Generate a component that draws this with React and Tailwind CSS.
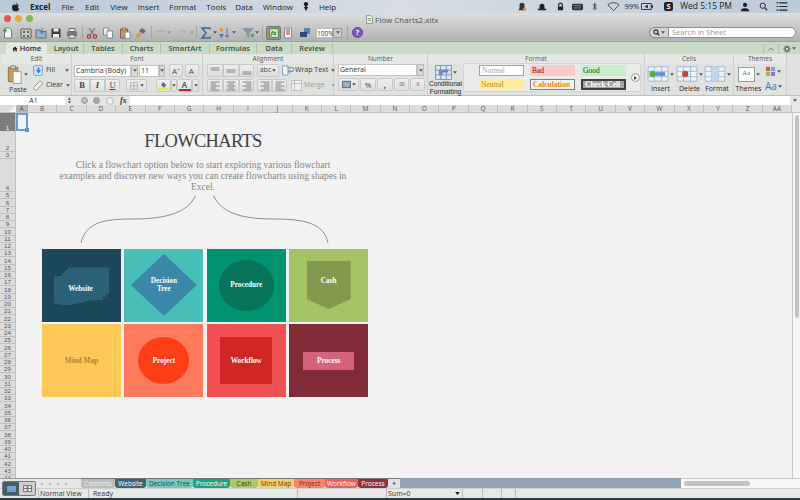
import React from "react";

const sans = "font-['Open_Sans',sans-serif]";
const serif = "font-['Liberation_Serif',serif]";

const columns = ["B","C","D","E","F","G","H","I","J","K","L","M","N","O","P","Q","R","S","T","U","V","W","X","Y","Z","AA"];
const rows = Array.from({ length: 40 }, (_, i) => i + 5);
const menus = [
  ["File", "ml-[11px]"], ["Edit", "ml-[11px]"], ["View", "ml-[11px]"], ["Insert", "ml-[10px]"], ["Format", "ml-[10px]"],
  ["Tools", "ml-[10px]"], ["Data", "ml-[9px]"], ["Window", "ml-[10px]"],
];
const ribbonTabs = [
  ["Layout", "w-[35px]"], ["Tables", "w-[39px]"], ["Charts", "w-[38px]"], ["SmartArt", "w-[49px]"],
  ["Formulas", "w-[47px]"], ["Data", "w-[35px]"], ["Review", "w-[41px]"],
];
const sheetTabs = [
  ["Contents", "w-[34px] bg-[#bcbcbc] text-[#f2f2f2]"],
  ["Website", "w-[31px] bg-[#3e6474] text-white"],
  ["Decision Tree", "w-[47px] bg-[#79c9bf] text-[#23433f]"],
  ["Procedure", "w-[37px] bg-[#21a17f] text-white"],
  ["Cash", "w-[28px] bg-[#aac86e] text-[#36421c]"],
  ["Mind Map", "w-[36px] bg-[#f7cd6c] text-[#5b4412]"],
  ["Project", "w-[31px] bg-[#fb8468] text-[#6e1e0c]"],
  ["Workflow", "w-[33px] bg-[#ee6060] text-white"],
  ["Process", "w-[30px] bg-[#8a3242] text-white"],
];

function Ico({ className = "", children }) {
  return <svg viewBox="0 0 12 12" className={`w-[12px] h-[12px] shrink-0 ${className}`}>{children}</svg>;
}
function Caret({ className = "" }) {
  return <svg viewBox="0 0 6 4" className={`w-[4px] h-[3px] shrink-0 ${className}`}><path d="M0 0h6L3 4z" fill="#555" /></svg>;
}
function Sep({ className = "" }) {
  return <div className={`w-px h-[13px] shrink-0 bg-[#a5a5a5] ${className}`} />;
}
function Btn({ className = "", children }) {
  return <div className={`h-[13px] shrink-0 flex items-center justify-center border border-[#c9c9c9] rounded-[2px] bg-linear-to-b from-[#efefef] to-[#dedede] text-[#444] ${className}`}>{children}</div>;
}
function Group({ w, label, children }) {
  return (
    <div className={`${w} shrink-0 h-full flex flex-col border-r border-[#cdd1cd]`}>
      <div className={`h-[10px] leading-[10px] text-center text-[6.5px] text-[#555] bg-[#e6e8e6] ${sans}`}>{label}</div>
      <div className="flex-1 flex whitespace-nowrap">{children}</div>
    </div>
  );
}
function Lines({ kind }) {
  const ys = { top: [3, 5], mid: [5, 7], bot: [7, 9], left: [2, 4, 6, 8, 10], center: [2, 4, 6, 8, 10], right: [2, 4, 6, 8, 10] }[kind];
  return (
    <Ico className="w-[11px] h-[11px]">
      {ys.map((y, i) => {
        const short = i % 2 === 1;
        const x1 = kind === "right" && short ? 5 : kind === "center" && short ? 3 : 1.5;
        const x2 = kind === "left" && short ? 7 : kind === "center" && short ? 9 : 10.5;
        return <path key={y} d={`M${x1} ${y}H${x2}`} stroke="#808080" strokeWidth="1" />;
      })}
    </Ico>
  );
}
function Grid3({ children }) {
  return (
    <svg viewBox="0 0 24 20" className="w-[22px] h-[18px] shrink-0">
      <path d="M1 2h22v16H1z" fill="#eef3f8" stroke="#9db6d2" />
      <path d="M1 7h22M1 13h22M8 2v16M16 2v16" stroke="#9db6d2" />
      {children}
    </svg>
  );
}

export default function App() {
  return (
    <div className={`w-[800px] h-[500px] overflow-hidden flex flex-col bg-[#f2f2f2] ${sans}`}>
      {/* Mac menu bar */}
      <div className="h-[13px] shrink-0 flex items-center bg-linear-to-r from-[#b9c9d8] via-[#d6dde4] to-[#bccbd9] text-[8px] text-[#222] pl-[11px] pr-[12px]">
        <svg viewBox="0 0 12 14" className="w-[9px] h-[10px]"><path d="M8.6 1c.1 1-.9 2.400-2.200 2.300C6.300 2.100 7.500 1 8.600 1zM6.300 3.900c.6 0 1.200-.5 2.200-.5.9 0 1.800.5 2.300 1.200-2 1.200-1.600 4 .4 4.800-.5 1.400-1.700 3.600-3 3.600-.8 0-1.100-.5-2-.5s-1.300.5-2 .5C2.700 13 1 10 1 7.600 1 5 2.700 3.500 4.300 3.500c.9 0 1.500.4 2 .4z" fill="#222" /></svg>
        <span className="ml-[10px] font-bold">Excel</span>
        {menus.map(([m, c]) => <span key={m} className={c}>{m}</span>)}
        <svg viewBox="0 0 8 12" className="w-[6px] h-[9px] ml-[10px]"><path d="M4 0c2 0 3 1 3 3 0 1.500-2 2-2 3.500h2L4 12 1 6.500h2C3 5 1 4.500 1 3c0-2 1-3 3-3z" fill="#222" /></svg>
        <span className="ml-[10px]">Help</span>
        <div className="ml-auto flex items-center text-[#1b1b1b]">
          <svg viewBox="0 0 12 12" className="w-[10px] h-[10px]"><path d="M6 1a3 3 0 0 1 3 3v3l1 3H2l1-3V4a3 3 0 0 1 3-3z" fill="#333" /><circle cx="9" cy="8.500" r="2" fill="#e28a2b" /></svg>
          <svg viewBox="0 0 12 12" className="w-[12px] h-[10px] ml-[9px]"><path d="M3 8V5a3 3 0 0 1 6 0v3h2v2H1V8z" fill="#222" /></svg>
          <svg viewBox="0 0 12 12" className="w-[9px] h-[9px] ml-[8px]"><path d="M3.500 6V4a2.500 2.500 0 0 1 5 0v2" fill="none" stroke="#222" strokeWidth="1.500" /><path d="M2.500 6h7v5h-7z" fill="#222" /></svg>
          <svg viewBox="0 0 12 8" className="w-[11px] h-[8px] ml-[7px]"><rect x="0" y="0.500" width="12" height="7" rx="1.500" fill="#333" /><path d="M2 2.500h8M2 5h8" stroke="#888" /></svg>
          <svg viewBox="0 0 8 12" className="w-[6px] h-[9px] ml-[9px]"><path d="M1 3l5 5-2.500 2.500v-9L6 4 1 9" fill="none" stroke="#333" /></svg>
          <svg viewBox="0 0 16 11" className="w-[13px] h-[9px] ml-[9px]"><path d="M1 3.500C5 0 11 0 15 3.500L8 10.500z" fill="none" stroke="#333" /></svg>
          <span className="ml-[4px] text-[7.5px]">99%</span>
          <svg viewBox="0 0 14 8" className="w-[12px] h-[7px] ml-[2px]"><path d="M.5.500h11.500v7H.500z" fill="none" stroke="#222" /><path d="M12.500 2.500H14v3h-1.500z" fill="#222" /><path d="M8 2L4 4l4 2z" fill="#222" /></svg>
          <div className="w-[9px] h-[9px] ml-[11px] rounded-[2px] bg-[#222] text-white text-[7.5px] leading-[9px] text-center font-bold">S</div>
          <span className="ml-[7px] text-[8.5px]">Wed 5:15 PM</span>
          <svg viewBox="0 0 12 12" className="w-[10px] h-[10px] ml-[8px]"><circle cx="6" cy="3.500" r="2.500" fill="#222" /><path d="M1 11c0-3 3-3.500 5-3.500s5 .5 5 3.500z" fill="#222" /></svg>
          <svg viewBox="0 0 12 12" className="w-[9px] h-[9px] ml-[9px]"><circle cx="5" cy="5" r="3.500" fill="none" stroke="#222" strokeWidth="1.300" /><path d="M7.500 7.500L11 11" stroke="#222" strokeWidth="1.500" /></svg>
          <svg viewBox="0 0 12 10" className="w-[12px] h-[9px] ml-[8px]"><path d="M0 1h2M3 1h9M0 5h2M3 5h9M0 9h2M3 9h9" stroke="#222" strokeWidth="1.300" /></svg>
        </div>
      </div>

      {/* Window title + toolbar */}
      <div className="h-[29px] shrink-0 flex flex-col bg-linear-to-b from-[#dedede] to-[#b2b2b2] border-b border-[#a0a0a0]">
        <div className="h-[12px] flex items-center relative pl-[4px]">
          <div className="w-[7px] h-[7px] rounded-full bg-[#e2574c]" />
          <div className="w-[7px] h-[7px] rounded-full bg-[#e9a83a] ml-[4px]" />
          <div className="w-[7px] h-[7px] rounded-full bg-[#7fb957] ml-[4px]" />
          <div className="absolute left-[366px] top-[1px] flex items-center text-[8px] leading-[11px] text-[#555]">
            <svg viewBox="0 0 8 10" className="w-[7px] h-[9px]"><path d="M.5.500h5l2 2v7h-7z" fill="#eef2ec" stroke="#889" /><path d="M2 4h4M2 6h4" stroke="#6a9a6a" /></svg>
            <span className="ml-[2px]">Flow Charts2.xltx</span>
          </div>
        </div>
        <div className="h-[17px] flex items-center pl-[2px]">
          <Ico><path d="M2.500 1h5l2 2v8h-7z" fill="#f5f5f5" stroke="#778" /><path d="M1 3.500h4M3 1.500v4" stroke="#3aa13a" strokeWidth="1.500" /></Ico>
          <Ico className="ml-[6px]"><path d="M1 2h10v9H1z" fill="#d8c9a0" stroke="#566" /><path d="M3 4h2v2H3zM7 4h2v2H7zM3 8h2v2H3zM7 8h2v2H7z" fill="#3b6f91" /></Ico>
          <Ico className="ml-[3px]"><path d="M1 3h4l1 1.500h5V11H1z" fill="#9db5cc" stroke="#5a6f84" /><path d="M7 1.500v5M5 4.500l2 2 2-2" stroke="#3d6fb0" fill="none" /></Ico>
          <Ico className="ml-[3px]"><path d="M1.500 1.500h8l1 1v8h-9z" fill="#3d3d3d" /><path d="M3.500 1.500h5v3h-5zM3 7h6v3.500H3z" fill="#eee" /></Ico>
          <Ico className="ml-[4px]"><path d="M3 1.500h6v3H3z" fill="#f4f4f4" stroke="#666" /><path d="M1 4.500h10v4.500H1z" fill="#777" /><path d="M3 8h6v3H3z" fill="#f4f4f4" stroke="#666" /></Ico>
          <Sep className="ml-[4px]" />
          <Ico className="ml-[3px]"><path d="M3 1l5 7M9 1L4 8" stroke="#777" strokeWidth="1.200" /><circle cx="3" cy="9.500" r="1.700" fill="none" stroke="#b33" strokeWidth="1.200" /><circle cx="9" cy="9.500" r="1.700" fill="none" stroke="#b33" strokeWidth="1.200" /></Ico>
          <Ico className="ml-[4px]"><path d="M1.500 1h5v7h-5z" fill="#eee" stroke="#889" /><path d="M5 4h5.500v7H5z" fill="#fff" stroke="#889" /></Ico>
          <Ico className="ml-[5px]"><path d="M1.500 2h7v9h-7z" fill="#c89a50" stroke="#856" /><path d="M3.500 1h3v2h-3z" fill="#ddd" stroke="#777" /><path d="M6 5h5v6.500H6z" fill="#fff" stroke="#889" /></Ico>
          <Ico className="ml-[4px]"><path d="M7 1l4 3-3 3-4-3z" fill="#7a5a86" /><path d="M4.500 5L1 8.500V11h2.500l3-3.500z" fill="#d8a03c" /></Ico>
          <Sep className="ml-[4px]" />
          <Ico className="ml-[2px]"><path d="M2 7C2 3 8 2.500 10 5.500" fill="none" stroke="#bbb08a" strokeWidth="2" /><path d="M1 3.500v5h5z" fill="#c9bf9a" /></Ico>
          <Caret className="ml-[1px] opacity-40" />
          <Ico className="ml-[6px]"><path d="M10 7C10 3 4 2.500 2 5.500" fill="none" stroke="#aebbc6" strokeWidth="2" /><path d="M11 3.500v5H6z" fill="#b6c2cc" /></Ico>
          <Caret className="ml-[1px] opacity-40" />
          <Sep className="ml-[2px]" />
          <Ico className="ml-[3px]"><path d="M10 2.500V1H2l4 5-4 5h8V9.500" fill="none" stroke="#36679f" strokeWidth="1.500" /></Ico>
          <Caret className="ml-[1px]" />
          <Ico className="ml-[1px]"><circle cx="3.500" cy="3" r="2" fill="#e09a30" /><path d="M1 7h5L3.500 11z" fill="#3f7fb5" /><path d="M9 1v9M7 8l2 2.500L11 8" stroke="#3a7ab5" fill="none" /></Ico>
          <Caret className="ml-[2px]" />
          <Ico className="ml-[6px]"><path d="M0 1h12L7.500 6v5l-3-1V6z" fill="#8a97a5" /><path d="M9 7h3v3H9z" fill="#4f9e6a" /></Ico>
          <Caret className="ml-[1px]" />
          <Sep className="ml-[3px]" />
          <div className="ml-[3px] w-[15px] h-[14px] shrink-0 flex items-center justify-center rounded-[2px] bg-[#8b968d] border border-[#70786f]">
            <div className="w-[10px] h-[10px] rounded-[2px] bg-[#cfe0b5] border border-[#5c8a4c] text-[6px] leading-[8px] text-center italic font-bold text-[#3f6f2f]">fx</div>
          </div>
          <Ico className="ml-[1px]"><path d="M2.500 1h7v10h-7z" fill="#f2f2f2" stroke="#889" /><path d="M4 3h4M4 5h4M4 7h4" stroke="#b33" /></Ico>
          <Ico className="ml-[5px]"><path d="M5 1h6v6H5z" fill="#5a82b5" /><path d="M1 5h7v5H1z" fill="#2f4e7a" /><path d="M3 10h3v2H3z" fill="#9bb" /></Ico>
          <div className="ml-[5px] w-[17px] h-[10px] bg-white border border-[#bbb] text-[6.5px] leading-[9px] text-center text-[#333]">100%</div>
          <div className="w-[9px] h-[10px] bg-[#ccc] border border-[#999] flex items-center justify-center"><Caret /></div>
          <Sep className="ml-[5px]" />
          <div className="ml-[4px] w-[11px] h-[11px] rounded-full bg-[#7e5ab8] border border-[#5f4390] text-white text-[7px] leading-[9px] text-center font-bold">?</div>
          <div className="ml-auto mr-[4px] flex items-center">
            <div className="w-[19px] h-[11px] flex items-center justify-center rounded-l-full bg-[#d5d5d5] border border-[#8d8d8d] border-r-0">
              <svg viewBox="0 0 12 12" className="w-[7px] h-[7px]"><circle cx="5" cy="5" r="3.500" fill="none" stroke="#222" strokeWidth="1.800" /><path d="M7.500 7.500L11 11" stroke="#222" strokeWidth="2" /></svg>
              <Caret className="ml-[1px]" />
            </div>
            <div className="w-[128px] h-[11px] bg-white border border-[#8d8d8d] rounded-r-full text-[7.5px] leading-[9px] pl-[3px] text-[#999]">Search in Sheet</div>
          </div>
        </div>
      </div>

      {/* Ribbon tabs */}
      <div className="h-[12px] shrink-0 flex items-end bg-[#c9dbc6] pl-[6px] pr-[2px] text-[7.5px] font-semibold text-[#3d4a3d]">
        <div className="w-[41px] h-[11px] flex items-center justify-center rounded-t-[2px] bg-[#e6e8e6] text-[#222]">
          <svg viewBox="0 0 10 10" className="w-[6px] h-[6px] mr-[2px]"><path d="M5 1l4.500 4H8v4H6V6.500H4V9H2V5H.500z" fill="#222" /></svg>
          Home
        </div>
        <div className="w-[2px]" />
        {ribbonTabs.map(([t, w]) => (
          <div key={t} className={`${w} h-[11px] flex items-center justify-center border-r border-[#afc4ab]`}>{t}</div>
        ))}
        <div className="ml-auto h-[11px] flex items-center text-[#777] pr-[2px]">
          <div className="w-px h-[10px] bg-[#afc4ab] mr-[4px]" />
          <svg viewBox="0 0 8 5" className="w-[6px] h-[4px]"><path d="M.5 4.500L4 1l3.500 3.500" fill="none" stroke="#666" /></svg>
          <div className="w-px h-[10px] bg-[#afc4ab] mx-[4px]" />
          <svg viewBox="0 0 12 12" className="w-[8px] h-[8px]"><circle cx="6" cy="6" r="3" fill="none" stroke="#666" strokeWidth="2" /><path d="M6 0v2.500M6 9.500V12M0 6h2.500M9.500 6H12M1.800 1.800l2 2M8.200 8.200l2 2M1.800 10.200l2-2M8.200 3.800l2-2" stroke="#666" strokeWidth="1.300" /></svg>
          <Caret className="ml-[1px]" />
        </div>
      </div>

      {/* Ribbon */}
      <div className="h-[42px] shrink-0 flex bg-[#dfe2df] pl-[2px] border-b border-[#bcc0bc] text-[7px] text-[#333]">
        <Group w="w-[70px]" label="Edit">
          <div className="w-[31px] pl-[5px] flex flex-col">
            <div className="flex items-center h-[21px]">
              <svg viewBox="0 0 15 20" className="w-[15px] h-[19px] shrink-0"><path d="M1 2.500h10v15H1z" fill="#c79b5a" stroke="#94713c" /><path d="M3.500 1h5v3h-5z" fill="#ddd" stroke="#777" /><path d="M6 7h8.500v12.500H6z" fill="#f9f9f9" stroke="#999" /></svg>
              <Caret className="ml-[2px]" />
            </div>
            <span className="text-[7px] leading-[9px] ml-[2px]">Paste</span>
          </div>
          <div className="flex-1 flex flex-col gap-[2px]">
            <div className="h-[13px] flex items-center">
              <div className="w-[10px] h-[11px] rounded-[2px] bg-[#cfe0f3] border border-[#86a8ce] flex items-center justify-center">
                <svg viewBox="0 0 8 8" className="w-[7px] h-[7px]"><path d="M3 .5h2v3h2L4 7.500 1 3.500h2z" fill="#3f82d0" /></svg>
              </div>
              <span className="ml-[3px]">Fill</span>
              <Caret className="ml-[10px]" />
            </div>
            <div className="h-[13px] flex items-center">
              <svg viewBox="0 0 12 12" className="w-[11px] h-[11px] shrink-0"><path d="M1 8l6-6.500c1-1 4 1.500 3 3L4 11C2.500 12 0 9.500 1 8z" fill="#f5f5f5" stroke="#888" /></svg>
              <span className="ml-[2px]">Clear</span>
              <Caret className="ml-[3px]" />
            </div>
          </div>
        </Group>

        <Group w="w-[131px]" label="Font">
          <div className="flex flex-col gap-[2px] pl-[2px]">
            <div className="flex items-center">
              <div className="w-[57px] h-[12px] bg-white border border-[#c4c4c4] text-[7px] leading-[10px] pl-[1px]">Cambria (Body)</div>
              <div className="w-[7px] h-[12px] bg-[#d8d8d8] border border-[#bbb] flex items-center justify-center"><Caret /></div>
              <div className="w-[20px] h-[12px] ml-[1px] bg-white border border-[#c4c4c4] leading-[10px] pl-[1px]">11</div>
              <div className="w-[6px] h-[12px] bg-[#d8d8d8] border border-[#bbb] flex items-center justify-center"><Caret /></div>
              <Btn className="w-[14px] ml-[4px] text-[8px]">A<span className="text-[5px] text-[#4a7db5]">+</span></Btn>
              <Btn className="w-[14px] ml-[2px] text-[8px]">A<span className="text-[5px] text-[#4a7db5]">-</span></Btn>
            </div>
            <div className="flex items-center">
              <Btn className={`w-[16px] font-bold text-[8.5px] rounded-r-none ${serif}`}>B</Btn>
              <Btn className={`w-[15px] italic font-bold text-[8.5px] rounded-none ${serif}`}>I</Btn>
              <Btn className={`w-[15px] underline text-[8.5px] rounded-l-none ${serif}`}>U</Btn>
              <Btn className="w-[21px] ml-[6px]">
                <svg viewBox="0 0 10 10" className="w-[8px] h-[8px]"><path d="M.5.500h9v9h-9zM5 .5v9M.5 5h9" fill="none" stroke="#aaa" /></svg>
                <Caret className="ml-[2px]" />
              </Btn>
              <Btn className="w-[15px] ml-[9px] flex-col">
                <svg viewBox="0 0 10 8" className="w-[8px] h-[6px]"><path d="M4 0l4 4-3 3.500-4-3.500z" fill="#3b76ad" /></svg>
                <div className="w-[12px] h-[2px] bg-[#f2e73c]" />
              </Btn>
              <Btn className="w-[6px]"><Caret /></Btn>
              <Btn className="w-[15px] flex-col text-[8px] leading-[8px] font-semibold">A<div className="w-[12px] h-[2px] bg-[#d71920]" /></Btn>
              <Btn className="w-[7px]"><Caret /></Btn>
            </div>
          </div>
        </Group>

        <Group w="w-[131px]" label="Alignment">
          <div className="flex flex-col gap-[2px] pl-[4px]">
            <div className="flex items-center">
              <Btn className="w-[16px] rounded-r-none"><Lines kind="top" /></Btn>
              <Btn className="w-[16px] rounded-none from-[#b5b5b5] to-[#bdbdbd]"><Lines kind="mid" /></Btn>
              <Btn className="w-[15px] rounded-l-none"><Lines kind="bot" /></Btn>
              <Btn className="w-[22px] ml-[3px] text-[7px]">abc<Caret className="ml-[1px]" /></Btn>
              <svg viewBox="0 0 13 12" className="w-[12px] h-[11px] ml-[3px] shrink-0"><path d="M.5 1h6v10h-6z" fill="#eef3f8" stroke="#7c9cc0" /><path d="M6 3h5a2 2 0 0 1 0 4H8M9 5L7 7l2 2" fill="none" stroke="#3f82d0" /></svg>
              <span className="ml-[1px]">Wrap Text</span>
              <Caret className="ml-[3px]" />
            </div>
            <div className="flex items-center">
              <Btn className="w-[16px] rounded-r-none"><Lines kind="left" /></Btn>
              <Btn className="w-[16px] rounded-none"><Lines kind="center" /></Btn>
              <Btn className="w-[15px] rounded-l-none"><Lines kind="right" /></Btn>
              <Btn className="w-[15px] ml-[3px] rounded-r-none"><Lines kind="right" /></Btn>
              <Btn className="w-[15px] rounded-l-none"><Lines kind="left" /></Btn>
              <svg viewBox="0 0 12 12" className="w-[11px] h-[11px] ml-[4px] shrink-0"><path d="M.5.500h11v11H.500zM4 .5v11M.5 4h11" fill="#eef0ee" stroke="#bbb" /></svg>
              <span className="ml-[2px] text-[#999]">Merge</span>
              <Caret className="ml-[6px] opacity-40" />
            </div>
          </div>
        </Group>

        <Group w="w-[94px]" label="Number">
          <div className="flex flex-col gap-[2px] pl-[4px]">
            <div className="flex items-center">
              <div className="w-[79px] h-[12px] bg-white border border-[#c4c4c4] leading-[10px] pl-[1px]">General</div>
              <div className="w-[7px] h-[12px] bg-[#d8d8d8] border border-[#bbb] flex items-center justify-center"><Caret /></div>
            </div>
            <div className="flex items-center">
              <Btn className="w-[21px]">
                <svg viewBox="0 0 10 10" className="w-[9px] h-[9px]"><path d="M.5 1.500h9v7h-9z" fill="#7fb1d8" stroke="#557" /><circle cx="5" cy="5" r="2" fill="#e0b040" /></svg>
                <Caret className="ml-[1px]" />
              </Btn>
              <Btn className="w-[16px] ml-[1px] text-[8px]">%</Btn>
              <Btn className="w-[16px] ml-[1px] font-bold text-[8px]">,</Btn>
              <Btn className="w-[15px] ml-[1px] text-[4.5px] leading-[5px] text-[#2f78b5]">.00</Btn>
              <Btn className="w-[15px] ml-[1px] text-[4.5px] leading-[5px] text-[#2f78b5]">.0</Btn>
            </div>
          </div>
        </Group>

        <Group w="w-[217px]" label="Format">
          <div className="w-[35px] flex flex-col items-center">
            <div className="h-[16px] flex items-center">
              <svg viewBox="0 0 18 16" className="w-[17px] h-[15px] shrink-0"><path d="M.5.500h17v15H.500z" fill="#dfe9f5" stroke="#6f93bd" /><path d="M4 5h4v6H4z" fill="#d9534f" /><path d="M8 5h6v3H8z" fill="#4a80c4" /><path d="M.5 5.500h17M.5 10.500h17M6 .5v15M12 .5v15" stroke="#6f93bd" /></svg>
              <Caret className="ml-[1px]" />
            </div>
            <div className="font-['Liberation_Sans',sans-serif] text-[6.6px] leading-[7.7px] text-center text-[#222]">Conditional<br />Formatting</div>
          </div>
          <div className={`w-[178px] h-[29px] mt-[-1px] bg-[#e9ebe9] border border-[#d2d5d2] rounded-[2px] flex items-center pl-[15px] ${serif} text-[7.5px]`}>
            <div className="grid grid-cols-[45px_45px_45px] grid-rows-[11px_11px] gap-x-[6px] gap-y-[3px]">
              <div className="bg-white border border-[#71c088] text-[#aaa] pl-[2px] leading-[9px]">Normal</div>
              <div className="bg-[#ffc7ce] text-[#9c0006] pl-[2px] leading-[11px]">Bad</div>
              <div className="bg-[#c6efce] text-[#006100] pl-[2px] leading-[11px]">Good</div>
              <div className="bg-[#ffeb9c] text-[#b5851a] pl-[2px] leading-[11px]">Neutral</div>
              <div className="bg-[#f2f2f2] border border-[#7f7f7f] text-[#fa7d00] font-bold pl-[2px] leading-[9px]">Calculation</div>
              <div className="bg-[#a5a5a5] border-2 border-[#3f3f3f] text-white font-bold pl-[2px] leading-[7px]">Check Cell</div>
            </div>
            <div className="w-[9px] h-[9px] ml-[5px] rounded-full bg-[#f5f5f5] border border-[#999] flex items-center justify-center">
              <svg viewBox="0 0 4 6" className="w-[3px] h-[4px]"><path d="M0 0l4 3-4 3z" fill="#333" /></svg>
            </div>
          </div>
        </Group>

        <Group w="w-[89px]" label="Cells">
          <div className="flex pl-[1px] text-[7px] text-[#222]">
            <div className="w-[29px] flex flex-col items-center">
              <div className="h-[20px] flex items-center"><Grid3><circle cx="6" cy="10" r="3.500" fill="#4caf50" /><path d="M9 8h11v4H9z" fill="#5b8fd0" /></Grid3><Caret className="ml-[1px]" /></div>
              <span className="leading-[9px]">Insert</span>
            </div>
            <div className="w-[29px] flex flex-col items-center">
              <div className="h-[20px] flex items-center"><Grid3><circle cx="10" cy="10" r="3.500" fill="#c8452f" /></Grid3><Caret className="ml-[1px]" /></div>
              <span className="leading-[9px]">Delete</span>
            </div>
            <div className="w-[26px] flex flex-col items-center">
              <div className="h-[20px] flex items-center"><Grid3><path d="M8 2h8v16H8z" fill="#c3d5ea" /></Grid3><Caret className="ml-[1px]" /></div>
              <span className="leading-[9px]">Format</span>
            </div>
          </div>
        </Group>

        <Group w="w-[53px]" label="Themes">
          <div className="flex">
            <div className="w-[29px] flex flex-col items-center">
              <div className="h-[20px] flex items-center">
                <div className={`w-[17px] h-[15px] bg-white border border-[#999] text-[7px] leading-[11px] text-center text-[#3f6fa8] ${serif}`}>Aa</div>
                <Caret className="ml-[1px]" />
              </div>
              <span className="text-[7px] leading-[9px] text-[#222]">Themes</span>
            </div>
            <div className="flex flex-col ml-[2px]">
              <div className="h-[15px] flex items-center">
                <svg viewBox="0 0 12 12" className="w-[11px] h-[11px] shrink-0"><path d="M1 1h4.500v4.500H1z" fill="#d9534f" /><path d="M6.500 1H11v4.500H6.500z" fill="#6fa8dc" /><path d="M1 6.500h4.500V11H1z" fill="#8cc152" /><path d="M6.500 6.500H11V11H6.500z" fill="#a56cc1" /></svg>
                <Caret className="ml-[1px]" />
              </div>
              <div className="h-[14px] flex items-center text-[#3a79c0] text-[10px]">Aa<Caret className="ml-[1px]" /></div>
            </div>
          </div>
        </Group>
      </div>

      {/* Formula bar */}
      <div className="h-[9px] shrink-0 flex items-center bg-[#e6e6e6] text-[7px] text-[#333]">
        <div className="w-[65px] h-full bg-white text-center leading-[9px] pl-[2px]">A1</div>
        <svg viewBox="0 0 4 8" className="w-[3px] h-[7px] ml-[3px]"><path d="M0 3l2-3 2 3zM0 5l2 3 2-3z" fill="#444" /></svg>
        <div className="w-[7px] h-[7px] ml-[10px] rounded-full bg-[#b9b9b9] border border-[#999]" />
        <div className="w-[7px] h-[7px] ml-[5px] rounded-full bg-[#a9a9a9] border border-[#999]" />
        <div className="w-[8px] h-[8px] ml-[6px] rounded-full bg-[#efefef] border border-[#bbb]" />
        <span className={`ml-[6px] italic font-bold text-[8px] leading-[9px] ${serif}`}>fx</span>
        <div className="w-[660px] h-full ml-[3px] bg-white" />
        <Caret className="ml-[3px]" />
      </div>

      {/* Column headers */}
      <div className="h-[8px] shrink-0 flex bg-[#dcdcdc] border-b border-[#c0c0c0] text-[6.5px] leading-[7px] text-[#555]">
        <div className="w-[16px] shrink-0 flex justify-end items-end"><div className="w-0 h-0 border-l-[7px] border-l-transparent border-b-[7px] border-b-[#f6f6f6]" /></div>
        <div className="w-[12px] shrink-0 text-center bg-[#b6b6b6] border-r border-[#aaa]">A</div>
        {columns.map(c => <div key={c} className="w-[29.4px] shrink-0 text-center border-r border-[#bfbfbf]">{c}</div>)}
        <div className="flex-1 bg-[#e8e8e8]" />
      </div>

      {/* Sheet */}
      <div className="h-[365px] shrink-0 flex overflow-hidden relative">
        <div className="w-[16px] shrink-0 flex flex-col bg-[#dcdcdc] border-r border-[#c0c0c0] font-['Liberation_Sans',sans-serif] text-[6.2px] leading-[7px] text-[#555]">
          <div className="h-[18px] shrink-0 flex items-end justify-center bg-[#7d7d7d] text-white">1</div>
          <div className="h-[21px] shrink-0 flex items-end justify-center border-b border-[#c0c0c0]">2</div>
          <div className="h-[7px] shrink-0 flex items-end justify-center border-b border-[#c0c0c0]">3</div>
          <div className="h-[33px] shrink-0 flex items-end justify-center border-b border-[#c0c0c0]">4</div>
          {rows.map(r => <div key={r} className="h-[7.25px] shrink-0 flex items-end justify-center border-b border-[#c0c0c0]">{r}</div>)}
        </div>

        <div className="absolute left-[16px] top-0 w-[12px] h-[18px] border-2 border-[#6f97cf]">
          <div className="absolute right-[-3px] bottom-[-3px] w-[4px] h-[4px] bg-[#5d8ed6]" />
        </div>

        <div className="flex-1 pl-[26px] flex flex-col">
          <div className={`w-[322px] flex flex-col items-center ${serif}`}>
            <div className="mt-[16px] h-[24px] text-[18.5px] tracking-[-0.7px] leading-[24px] text-[#3f3f3f]">FLOWCHARTS</div>
            <div className="w-[290px] mt-[7px] text-center text-[9.5px] leading-[11px] text-[#858585]">
              Click a flowchart option below to start exploring various flowchart examples and discover new ways you can create flowcharts using shapes in Excel.
            </div>
          </div>
          <svg viewBox="0 0 326 50" className="w-[326px] h-[50px] mt-[2px] shrink-0" fill="none" stroke="#8c8c8c" strokeWidth="1">
            <path d="M153.500 .5C145 20 118 24 90 24C60 24 44 28 39 48" />
            <path d="M171.500 .5C180 20 205 24 232 24C262 24 282 28 286 48" />
          </svg>
          <div className={`mt-[3.500px] grid grid-cols-[79px_79px_79px_79px] grid-rows-[73px_73px] gap-x-[3.4px] gap-y-[2.5px] font-bold text-[7.3px] leading-[8px] text-white ${serif}`}>
            <div className="relative flex items-center justify-center bg-[#1c475a]">
              <svg viewBox="0 0 55 38" className="absolute left-[12px] top-[18px] w-[55px] h-[38px]">
                <path d="M8 6h3V3h3V0.500h41V27h-3v3h-3v3h-4C33 32 25 38 11 38C7 38 3 37 0 36V9h8z" fill="#2a6379" />
              </svg>
              <span className="relative mt-[7px] mr-[2px]">Website</span>
            </div>
            <div className="flex items-center justify-center bg-[#48c0b8]">
              <div className="w-[66px] h-[62px] flex items-center justify-center text-center bg-[#3a87a8] [clip-path:polygon(50%_0,100%_50%,50%_100%,0_50%)]">Decision<br />Tree</div>
            </div>
            <div className="flex items-center justify-center bg-[#00936f]">
              <div className="w-[55px] h-[51px] flex items-center justify-center rounded-[50%] bg-[#05745b]">Procedure</div>
            </div>
            <div className="flex items-center justify-center bg-[#a4c266]">
              <div className="w-[44px] h-[48px] flex items-start justify-center pt-[16px] bg-[#83994f] [clip-path:polygon(0_0,100%_0,100%_79%,50%_100%,0_79%)]">Cash</div>
            </div>
            <div className="flex items-center justify-center bg-[#fdc858] text-[#a8853a]">Mind Map</div>
            <div className="flex items-center justify-center bg-[#ff7a5c]">
              <div className="w-[51px] h-[47px] flex items-center justify-center rounded-[50%] bg-[#ff3d17]">Project</div>
            </div>
            <div className="flex items-center justify-center bg-[#f05152]">
              <div className="w-[52px] h-[47px] flex items-center justify-center bg-[#cf2727]">Workflow</div>
            </div>
            <div className="flex items-center justify-center bg-[#812a38]">
              <div className="w-[51px] h-[18px] flex items-center justify-center bg-[#d4627a]">Process</div>
            </div>
          </div>
        </div>

        <div className="w-[8px] shrink-0 flex justify-center bg-[#f6f6f6] border-l border-[#c8c8c8] pt-[2px]">
          <div className="w-[4px] h-[203px] rounded-full bg-[#c2c2c2]" />
        </div>
      </div>

      {/* Sheet tabs */}
      <div className="h-[10px] shrink-0 flex bg-[#e6e6e6] text-[6.5px] leading-[9px] relative">
        <div className="w-[81px] shrink-0 flex items-start text-[#aaa] text-[5px] pl-[40px] border-t border-[#999]">
          <span className="tracking-[2px]">◂ ◂ ▸ ▸</span>
        </div>
        {sheetTabs.map(([t, c]) => (
          <div key={t} className={`${c} shrink-0 text-center truncate border-t border-[#777] rounded-b-[3px]`}>{t}</div>
        ))}
        <div className="w-[12px] shrink-0 text-center bg-[#e2e2e2] font-bold text-[#555] rounded-b-[3px] border-t border-[#777]">+</div>
        <div className="w-[281px] shrink-0 bg-[#94a3b4]" />
        <div className="flex-1 flex items-center bg-[#f7f7f7] pl-[3px] border-t border-[#c8c8c8]">
          <div className="w-[66px] h-[5px] rounded-full bg-[#c2c2c2]" />
        </div>
      </div>

      {/* Status bar */}
      <div className="h-[10px] shrink-0 flex bg-[#e8e8e8] text-[7px] leading-[10px] text-[#333] relative border-t border-[#cfcfcf]">
        <div className="absolute left-[2px] top-[-8px] w-[34px] h-[15px] flex rounded-[2px] overflow-hidden border border-[#777]">
          <div className="flex-1 flex items-center justify-center bg-[#4a5a63]"><div className="w-[9px] h-[6px] bg-[#6fa3d8]" /></div>
          <div className="flex-1 flex items-center justify-center bg-[#cfcfcf]">
            <svg viewBox="0 0 10 8" className="w-[9px] h-[7px]"><path d="M.5.500h4v7h-4zM5.500.500h4v7h-4zM.5 4h4M5.500 4h4" fill="#eee" stroke="#666" /></svg>
          </div>
        </div>
        <div className="w-[38px] shrink-0" />
        <div className="w-[50px] shrink-0 border-l border-[#bbb] pl-[1px]">Normal View</div>
        <div className="w-[209px] shrink-0 border-l border-[#bbb] pl-[4px]">Ready</div>
        <div className="w-[89px] shrink-0 border-l border-[#bbb]" />
        <div className="w-[76px] shrink-0 border-l border-[#bbb] pl-[1px] flex items-center">
          Sum=0
          <svg viewBox="0 0 6 4" className="w-[5px] h-[3px] ml-auto mr-[2px]"><path d="M0 0h6L3 4z" fill="#111" /></svg>
        </div>
        <div className="w-[20px] shrink-0 border-l border-[#bbb]" />
        <div className="w-[19px] shrink-0 border-l border-[#bbb]" />
        <div className="w-[15px] shrink-0 border-l border-r border-[#bbb]" />
      </div>
      <div className="flex-1 bg-[#2f3a3f]" />
    </div>
  );
}
